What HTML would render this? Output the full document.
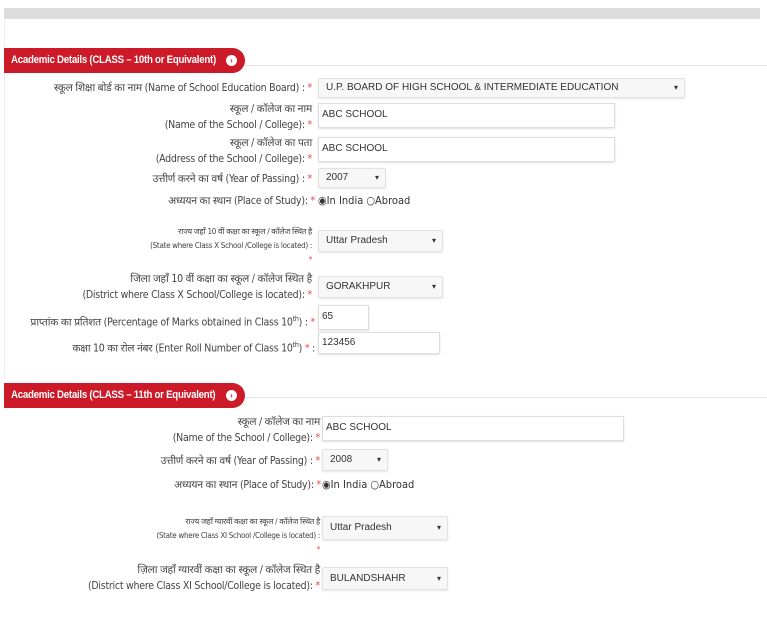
<!DOCTYPE html>
<html><head><meta charset="utf-8">
<style>
body{margin:0;width:767px;height:642px;background:#fff;position:relative;overflow:hidden;font-family:"Liberation Sans","DejaVu Sans",sans-serif;}
.a{position:absolute;white-space:nowrap}
.l{position:absolute;white-space:nowrap;text-align:right;font-size:10.5px;letter-spacing:-0.25px;color:#444;line-height:16px;font-family:"DejaVu Sans Condensed","DejaVu Sans","Liberation Sans",sans-serif;}
.s{font-size:8px;line-height:14px;letter-spacing:-0.3px}
.r{color:#e44}
.in{position:absolute;border:1px solid #ddd;background:#fff;font-size:10px;color:#333;box-sizing:border-box;padding-left:3px;box-shadow:0 1px 2px rgba(0,0,0,.12)}
.sel{position:absolute;border:1px solid #e2e2e2;background:#f7f7f7;font-size:10px;color:#333;box-sizing:border-box;padding-left:7px;border-radius:2px;box-shadow:0 1px 2px rgba(0,0,0,.1)}
.sel:after{content:"▾";position:absolute;right:6px;font-size:8px}
.tab{position:absolute;left:4px;width:241px;height:25px;background:#cc1a28;border-radius:0 13px 13px 0;color:#fff;font-weight:bold;font-size:11px;line-height:25px;padding-left:7px;box-sizing:border-box}
.tab span{display:inline-block;transform:scaleX(0.88);transform-origin:left center;letter-spacing:-0.3px}
.tab i{position:absolute;right:8px;top:7px;width:11px;height:11px;border-radius:50%;background:#fff;color:#cc1a28;font-style:normal;font-size:8px;line-height:11px;text-align:center}
.hr{position:absolute;left:245px;right:0;height:1px;background:#e4e4e4}
.rad{font-size:11px;color:#333;font-family:"DejaVu Sans Condensed","DejaVu Sans",sans-serif}
sup{font-size:7px}
</style></head><body>
<div class="a" style="left:4px;top:8px;width:756px;height:11px;background:#ddd"></div>
<div class="a" style="left:4px;top:19px;width:1px;height:360px;background:#eee"></div>

<div class="tab" style="top:48px"><span>Academic Details (CLASS – 10th or Equivalent)</span><i>›</i></div>
<div class="hr" style="top:65px"></div>

<div class="l" style="right:455px;top:80px">स्कूल शिक्षा बोर्ड का नाम (Name of School Education Board) : <span class="r">*</span></div>
<div class="sel" style="left:318px;top:78px;width:367px;height:20px;line-height:18px">U.P. BOARD OF HIGH SCHOOL &amp; INTERMEDIATE EDUCATION</div>

<div class="l" style="right:455px;top:101px">स्कूल / कॉलेज का नाम<br>(Name of the School / College): <span class="r">*</span></div>
<div class="in" style="left:318px;top:103px;width:297px;height:25px;line-height:22px">ABC SCHOOL</div>

<div class="l" style="right:455px;top:135px">स्कूल / कॉलेज का पता<br>(Address of the School / College): <span class="r">*</span></div>
<div class="in" style="left:318px;top:137px;width:297px;height:25px;line-height:22px">ABC SCHOOL</div>

<div class="l" style="right:455px;top:171px">उत्तीर्ण करने का वर्ष (Year of Passing) : <span class="r">*</span></div>
<div class="sel" style="left:318px;top:168px;width:68px;height:20px;line-height:18px">2007</div>

<div class="l" style="right:452px;top:193px">अध्ययन का स्थान (Place of Study): <span class="r">*</span></div>
<div class="a rad" style="left:318px;top:193px;line-height:16px">◉In India ○Abroad</div>

<div class="l s" style="right:455px;top:225px">राज्य जहाँ 10 वीं कक्षा का स्कूल / कॉलेज स्थित है<br>(State where Class X School /College is located) :<br><span class="r">*</span></div>
<div class="sel" style="left:318px;top:230px;width:125px;height:22px;line-height:20px">Uttar Pradesh</div>

<div class="l" style="right:455px;top:271px">जिला जहाँ 10 वीं कक्षा का स्कूल / कॉलेज स्थित है<br>(District where Class X School/College is located): <span class="r">*</span></div>
<div class="sel" style="left:318px;top:276px;width:125px;height:22px;line-height:20px">GORAKHPUR</div>

<div class="l" style="right:452px;top:311px">प्राप्तांक का प्रतिशत (Percentage of Marks obtained in Class 10<sup>th</sup>) : <span class="r">*</span></div>
<div class="in" style="left:318px;top:305px;width:51px;height:25px;line-height:22px">65</div>

<div class="l" style="right:452px;top:337px">कक्षा 10 का रोल नंबर (Enter Roll Number of Class 10<sup>th</sup>) <span class="r">*</span> :</div>
<div class="in" style="left:318px;top:332px;width:122px;height:22px;line-height:20px">123456</div>

<div class="tab" style="top:383px"><span>Academic Details (CLASS – 11th or Equivalent)</span><i>›</i></div>
<div class="hr" style="top:397px"></div>

<div class="l" style="right:447px;top:414px">स्कूल / कॉलेज का नाम<br>(Name of the School / College): <span class="r">*</span></div>
<div class="in" style="left:322px;top:416px;width:302px;height:25px;line-height:22px">ABC SCHOOL</div>

<div class="l" style="right:447px;top:453px">उत्तीर्ण करने का वर्ष (Year of Passing) : <span class="r">*</span></div>
<div class="sel" style="left:322px;top:449px;width:66px;height:22px;line-height:20px">2008</div>

<div class="l" style="right:446px;top:477px">अध्ययन का स्थान (Place of Study): <span class="r">*</span></div>
<div class="a rad" style="left:322px;top:477px;line-height:16px">◉In India ○Abroad</div>

<div class="l s" style="right:447px;top:515px">राज्य जहाँ ग्यारवीं कक्षा का स्कूल / कॉलेज स्थित है<br>(State where Class XI School /College is located) :<br><span class="r">*</span></div>
<div class="sel" style="left:322px;top:516px;width:126px;height:24px;line-height:22px">Uttar Pradesh</div>

<div class="l" style="right:447px;top:562px">ज़िला जहाँ ग्यारवीं कक्षा का स्कूल / कॉलेज स्थित है<br>(District where Class XI School/College is located): <span class="r">*</span></div>
<div class="sel" style="left:322px;top:567px;width:126px;height:23px;line-height:21px">BULANDSHAHR</div>
</body></html>
